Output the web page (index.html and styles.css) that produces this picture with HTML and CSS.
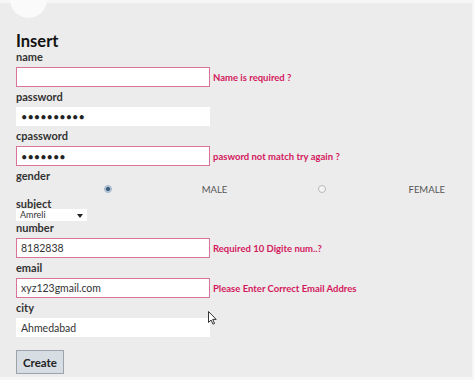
FILE: index.html
```html
<!DOCTYPE html>
<html>
<head>
<meta charset="utf-8">
<link rel="stylesheet" href="styles.css">
</head>
<body>
<div class="page">
  <div class="blob"></div>
  <form class="form">
    <h1 class="title">Insert</h1>

    <label class="lbl">name</label>
    <div class="row">
      <input class="field invalid" type="text" value="">
      <span class="err">Name is required ?</span>
    </div>

    <label class="lbl">password</label>
    <div class="row plain">
      <input class="field pw" type="password" value="abcdefghij">
    </div>

    <label class="lbl">cpassword</label>
    <div class="row">
      <input class="field pw invalid" type="password" value="abcdefg">
      <span class="err">pasword not match try again ?</span>
    </div>

    <label class="lbl">gender</label>
    <div class="gender">
      <span></span>
      <input class="radio" type="radio" name="g" checked>
      <span class="opt">MALE</span>
      <input class="radio" type="radio" name="g">
      <span class="opt last">FEMALE</span>
    </div>

    <label class="lbl lbl-subject">subject</label>
    <div class="select-wrap">
      <select class="select"><option>Amreli</option></select>
      <svg class="caret" width="6" height="4" viewBox="0 0 6 4"><path d="M0 0H6L3 4Z" fill="#222"/></svg>
    </div>

    <label class="lbl">number</label>
    <div class="row">
      <input class="field invalid" type="text" value="8182838">
      <span class="err">Required 10 Digite num..?</span>
    </div>

    <label class="lbl">email</label>
    <div class="row">
      <input class="field invalid" type="text" value="xyz123gmail.com">
      <span class="err">Please Enter Correct Email Addres</span>
    </div>

    <label class="lbl">city</label>
    <div class="row plain">
      <input class="field" type="text" value="Ahmedabad">
    </div>

    <button class="btn" type="button">Create</button>
  </form>
  <svg class="cursor" width="9" height="14" viewBox="0 0 9 14"><path d="M0.5 0.5V11.5L3 9L5 13.2L6.6 12.5L4.7 8.4H8.2Z" fill="#fff" stroke="#333" stroke-width="1" stroke-linejoin="round"/></svg>
</div>
</body>
</html>
```

FILE: styles.css
```css
* { box-sizing: border-box; }
html, body { margin: 0; padding: 0; }
body {
  background: #f6f6f6;
  font-family: Lato, "Open Sans", sans-serif;
  width: 474px;
  height: 380px;
  overflow: hidden;
}
.page {
  position: relative;
  margin-top: 3px;
  width: 472px;
  height: 374px;
  background: #ececec;
  padding-left: 16px;
}
.blob {
  position: absolute;
  left: 10px;
  top: -22px;
  width: 37px;
  height: 37px;
  border-radius: 50%;
  background: #fafafa;
}
.form {
  display: flex;
  flex-direction: column;
  align-items: flex-start;
  padding-top: 29px;
}
.title {
  margin: 0;
  font-size: 16.5px;
  line-height: 18px;
  font-weight: 700;
  color: #111;
}
.lbl {
  display: block;
  height: 14px;
  font-size: 11px;
  line-height: 14px;
  font-weight: 700;
  color: #333;
  margin-bottom: 3px;
}
.row {
  display: flex;
  align-items: center;
  gap: 3px;
  height: 20px;
  margin-bottom: 3px;
}
.field {
  width: 194px;
  height: 20px;
  margin: 0;
  border: 1px solid #fff;
  background: #fff;
  padding: 0 4px;
  font-family: Lato, "Open Sans", sans-serif;
  font-size: 10.5px;
  color: #333;
  outline: none;
}
.row.plain { height: 19px; }
.row.plain .field { height: 19px; }
.field.invalid { border-color: #d9739a; }
.pw {
  font-size: 11px;
  color: #222;
}
.err {
  font-size: 9.5px;
  font-weight: 700;
  color: #d3195d;
  white-space: nowrap;
}
.gender {
  display: grid;
  grid-template-columns: 38px 107px 107px 107px 89px;
  justify-items: center;
  align-items: center;
  width: 448px;
  height: 12px;
  margin-top: -3px;
  margin-bottom: 1px;
}
.opt {
  font-size: 9.5px;
  color: #555;
}
.opt.last {
  justify-self: end;
  padding-right: 19px;
}
.radio {
  appearance: none;
  -webkit-appearance: none;
  margin: 0;
  width: 8px;
  height: 8px;
  border-radius: 50%;
  border: 1px solid #b9b9b9;
  background: #f4f4f4;
}
.radio:checked {
  border-color: #9fb3c6;
  background: radial-gradient(circle, #3e5f80 0 1.6px, #8aa3bb 2.2px, #dfe7ee 3px);
}
.lbl-subject { margin-bottom: 0; height: 13px; line-height: 16px; }
.select-wrap {
  position: relative;
  width: 71px;
  height: 12px;
}
.select {
  appearance: none;
  -webkit-appearance: none;
  display: block;
  width: 71px;
  height: 12px;
  margin: 0;
  padding: 0 0 0 3px;
  border: 1px solid #fff;
  background: #fff;
  font-family: Lato, "Open Sans", sans-serif;
  font-size: 9px;
  line-height: 10px;
  color: #333;
  border-radius: 0;
}
.caret {
  position: absolute;
  right: 4px;
  top: 5px;
}
.btn {
  margin-top: 10px;
  width: 48px;
  height: 24px;
  padding: 0;
  border: 1px solid #9ca3aa;
  background: #d6dde3;
  font-family: Lato, "Open Sans", sans-serif;
  font-size: 11.5px;
  font-weight: 700;
  color: #222;
  border-radius: 0;
}
.cursor {
  position: absolute;
  left: 208px;
  top: 308px;
}
```
